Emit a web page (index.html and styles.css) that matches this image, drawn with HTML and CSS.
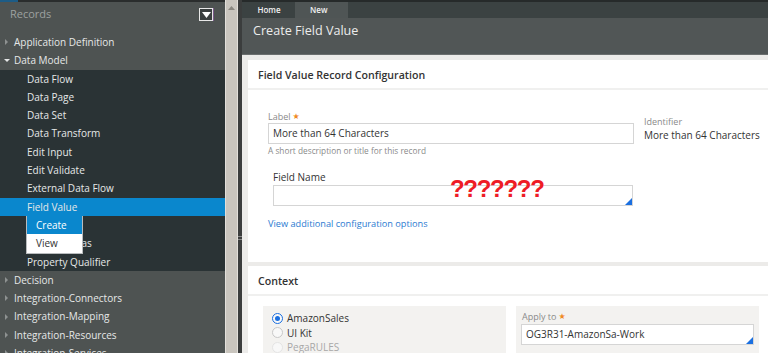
FILE: index.html
```html
<!DOCTYPE html>
<html>
<head>
<meta charset="utf-8">
<link rel="stylesheet" href="styles.css">
</head>
<body>
<div class="app">
  <aside class="sidebar">
    <div class="topstrip"><span class="bluebit"></span></div>
    <div class="records-head">
      <span class="records-title">Records</span>
      <span class="dd-btn"><svg width="9" height="6" viewBox="0 0 9 6"><path d="M0 0 H9 L4.5 6 Z" fill="#fff"/></svg></span>
    </div>
    <ul class="tree">
      <li class="cat"><span class="tri right"></span>Application Definition</li>
      <li class="cat"><span class="tri down"></span>Data Model</li>
      <li class="sub-group">
        <ul>
          <li class="leaf">Data Flow</li>
          <li class="leaf">Data Page</li>
          <li class="leaf">Data Set</li>
          <li class="leaf">Data Transform</li>
          <li class="leaf">Edit Input</li>
          <li class="leaf">Edit Validate</li>
          <li class="leaf">External Data Flow</li>
          <li class="leaf active">Field Value</li>
          <li class="leaf">Property</li>
          <li class="leaf">Property Alias</li>
          <li class="leaf">Property Qualifier</li>
        </ul>
        <div class="popup">
          <div class="pop-item sel">Create</div>
          <div class="pop-item">View</div>
        </div>
      </li>
      <li class="cat"><span class="tri right"></span>Decision</li>
      <li class="cat"><span class="tri right"></span>Integration-Connectors</li>
      <li class="cat"><span class="tri right"></span>Integration-Mapping</li>
      <li class="cat"><span class="tri right"></span>Integration-Resources</li>
      <li class="cat"><span class="tri right"></span>Integration-Services</li>
    </ul>
  </aside>
  <div class="scrollbar">
    <div class="sb-arrow"><svg width="7" height="4" viewBox="0 0 7 4"><path d="M0 4 L3.5 0 L7 4 Z" fill="#8a8780"/></svg></div>
  </div>
  <div class="splitter"><span class="grip"></span></div>
  <main class="main">
    <div class="tabbar">
      <div class="tab">Home</div>
      <div class="tab current">New</div>
    </div>
    <div class="page-head">Create Field Value</div>
    <div class="content">
      <section class="card">
        <h2 class="card-title">Field Value Record Configuration</h2>
        <div class="card-body cfg">
          <div class="row1">
            <div class="field label-field">
              <div class="flabel">Label<span class="req">&#9733;</span></div>
              <div class="input">More than 64 Characters</div>
              <div class="help">A short description or title for this record</div>
            </div>
            <div class="ident">
              <div class="flabel">Identifier</div>
              <div class="ident-val">More than 64 Characters</div>
            </div>
          </div>
          <div class="field fname">
            <div class="fname-label">Field Name</div>
            <div class="input empty"><span class="corner"></span></div>
            <div class="qq">???????</div>
          </div>
          <a class="more-link">View additional configuration options</a>
        </div>
      </section>
      <section class="card">
        <h2 class="card-title">Context</h2>
        <div class="card-body ctx">
          <div class="box radios">
            <div class="radio-row"><span class="radio on"></span>AmazonSales</div>
            <div class="radio-row"><span class="radio"></span>UI Kit</div>
            <div class="radio-row dis"><span class="radio"></span>PegaRULES</div>
          </div>
          <div class="box apply">
            <div class="flabel">Apply to<span class="req">&#9733;</span></div>
            <div class="input">OG3R31-AmazonSa-Work<span class="corner"></span></div>
          </div>
        </div>
      </section>
    </div>
  </main>
</div>
</body>
</html>
```
FILE: styles.css
```css
* { box-sizing: border-box; }
html, body { margin: 0; padding: 0; }
body {
  width: 768px;
  height: 353px;
  overflow: hidden;
  font-family: "Open Sans", "DejaVu Sans", sans-serif;
  background: #ecebe9;
}
.app { display: flex; height: 353px; overflow: hidden; }

/* sidebar */
.sidebar {
  width: 225px;
  flex: none;
  background: #4e5352;
  color: #e6e8e8;
  overflow: hidden;
}
.topstrip { height: 2px; background: #2a2d2d; }
.bluebit { display: block; width: 18px; height: 2px; background: #1d5c86; }
.records-head {
  height: 31px;
  display: flex;
  align-items: flex-start;
  justify-content: space-between;
  padding: 5px 12px 0 10px;
}
.records-title { color: #9da1a0; font-size: 11px; line-height: 14px; }
.dd-btn {
  width: 14px; height: 13px;
  margin-top: 1px;
  border: 1px solid #e8e8e8;
  background: #3a3f3f;
  display: flex; align-items: center; justify-content: center;
  box-shadow: 1px 0 0 #7a5a8a;
}
.tree { list-style: none; margin: 0; padding: 0; }
.tree ul { list-style: none; margin: 0; padding: 0; }
.cat {
  height: 18.3px;
  line-height: 18.3px;
  font-size: 10px;
  padding-left: 4px;
  display: flex;
  align-items: center;
  white-space: nowrap;
}
.tri { width: 0; height: 0; margin-right: 6px; flex: none; }
.tri.right { border-top: 3px solid transparent; border-bottom: 3px solid transparent; border-left: 3px solid #8e9291; margin-left: 1px; margin-right: 6px; }
.tri.down { border-left: 3px solid transparent; border-right: 3px solid transparent; border-top: 3px solid #e6e8e8; margin-right: 4px; }
.sub-group { background: #2a3335; position: relative; }
.leaf {
  height: 18.3px;
  line-height: 18.3px;
  font-size: 10px;
  padding-left: 27px;
  white-space: nowrap;
}
.leaf.active { background: #0a87cd; }
.popup {
  position: absolute;
  left: 26px;
  top: 146.4px;
  width: 57px;
  background: #fff;
  border: 1px solid #b9bcbe;
  border-top: none;
}
.pop-item {
  height: 18.5px;
  line-height: 18px;
  font-size: 10px;
  padding-left: 9px;
  color: #333;
}
.pop-item.sel { background: #0a87cd; color: #fff; }

/* scrollbar */
.scrollbar {
  width: 13px; flex: none;
  background: #c9c5be;
  border-left: 1px solid #e2dfda;
  border-right: 1px solid #e2dfda;
}
.sb-arrow { height: 14px; display: flex; align-items: center; justify-content: center; padding-top: 2px; }
.splitter {
  width: 4px; flex: none;
  background: #3b3d3d;
  position: relative;
}
.grip {
  position: absolute; left: 0; top: 236px;
  width: 4px; height: 4px;
  border-top: 1px solid #8a8a8a;
  border-bottom: 1px solid #8a8a8a;
}

/* main */
.main { flex: 1; display: flex; flex-direction: column; min-width: 0; background: #ecebe9; overflow: hidden; }
.tabbar {
  flex: none;
  height: 18px;
  background: #3b4242;
  border-top: 2px solid #262a2a;
  display: flex;
  padding-left: 1px;
}
.tab {
  width: 52px;
  font-size: 8px;
  font-weight: 600;
  color: #f0f0f0;
  text-align: center;
  line-height: 15px;
}
.tab.current { background: #4f5555; width: 53px; text-align: left; padding-left: 15px; }
.page-head {
  flex: none;
  height: 37px;
  background: #515656;
  color: #ececec;
  font-size: 12.6px;
  padding: 4px 0 0 11px;
  border-bottom: 1px solid #6a6e6e;
}
.content { flex: none; padding: 5px 0 0 6px; display: flex; flex-direction: column; gap: 4px; }
.card { background: #fff; flex: none; }
.card-title {
  margin: 0;
  height: 30px;
  font-size: 10.6px;
  font-weight: 600;
  color: #333;
  padding: 8px 0 0 10px;
  border-bottom: 2px solid #f0f0ef;
}
.cfg { height: 172px; padding: 20px 0 0 20px; position: relative; }
.row1 { display: flex; }
.label-field { width: 366px; flex: none; }
.flabel { font-size: 9px; color: #8a8a8a; line-height: 12px; }
.req { color: #f08a24; font-size: 8px; margin-left: 2px; vertical-align: 1px; }
.input {
  height: 21px;
  border: 1px solid #d5d5d5;
  font-size: 10px;
  color: #333;
  padding: 0 4px;
  line-height: 19px;
  position: relative;
  background: #fff;
  white-space: nowrap;
}
.help { font-size: 8.3px; color: #8a8a8a; margin-top: 1px; }
.ident { margin-left: 10px; padding-top: 6px; white-space: nowrap; }
.ident-val { font-size: 10px; color: #333; margin-top: 0; }
.fname { width: 360px; margin: 15px 0 0 5px; position: relative; }
.fname-label { font-size: 10px; color: #333; line-height: 13px; margin-bottom: 1px; }
.corner {
  position: absolute; right: 0; bottom: 0;
  width: 0; height: 0;
  border-left: 7px solid transparent;
  border-bottom: 7px solid #1a6fe0;
}
.qq {
  position: absolute;
  left: 177px; top: 6px;
  font-size: 24px;
  font-weight: 700;
  color: #ee1c25;
  letter-spacing: -1.3px;
  line-height: 24px;
  font-family: "Liberation Sans", Arial, sans-serif;
}
.more-link {
  display: block;
  margin-top: 11px;
  font-size: 9.2px;
  color: #2b7bd1;
}
.ctx { display: flex; gap: 10px; padding: 10px 0 0 15px; height: 60px; }
.box { background: #f3f2f0; }
.radios { width: 243px; padding: 5px 9px; flex: none; }
.apply { width: 243px; padding: 4px 5px 0 5px; flex: none; }
.apply .flabel { margin-left: 1px; margin-bottom: 1px; }
.radio-row { display: flex; align-items: center; font-size: 10px; color: #333; height: 14.5px; }
.radio-row.dis { color: #a8a8a8; }
.radio {
  width: 11px; height: 11px;
  border-radius: 50%;
  border: 1px solid #c8c8c8;
  background: #f8f8f8;
  margin-right: 4px;
  position: relative;
}
.radio.on { border-color: #1a6fe0; }
.radio.on::after {
  content: ""; position: absolute; left: 2px; top: 2px;
  width: 5px; height: 5px; border-radius: 50%; background: #1a6fe0;
}
.radio-row.dis .radio { border-color: #e4e4e4; }
```
